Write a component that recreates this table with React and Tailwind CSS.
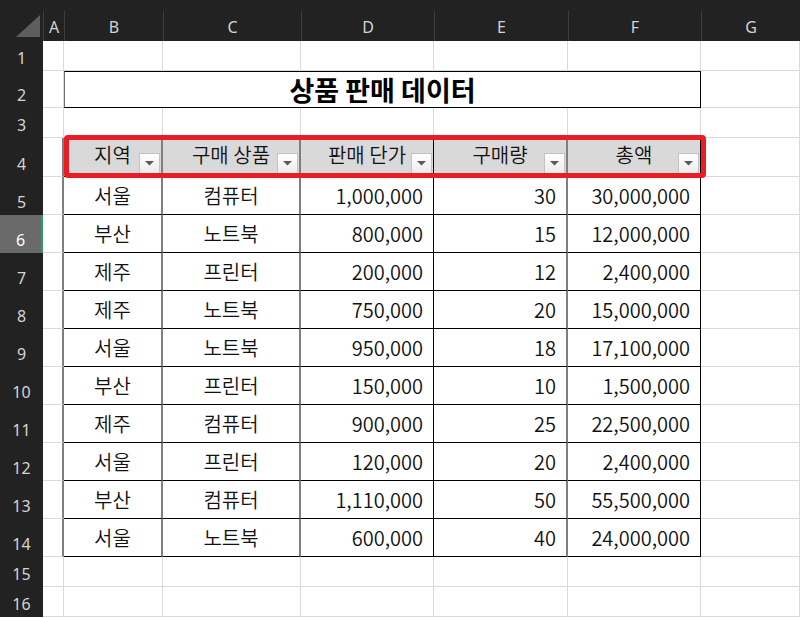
import React from "react";

const W = ["w-[21px]", "w-[99px]", "w-[138px]", "w-[133px]", "w-[134px]", "w-[133px]", "flex-1"];
const LETTERS = ["A", "B", "C", "D", "E", "F", "G"];
const FONT = "font-['Noto_Sans_CJK_KR','Noto_Sans',sans-serif]";

const data = [
  ["서울", "컴퓨터", "1,000,000", "30", "30,000,000"],
  ["부산", "노트북", "800,000", "15", "12,000,000"],
  ["제주", "프린터", "200,000", "12", "2,400,000"],
  ["제주", "노트북", "750,000", "20", "15,000,000"],
  ["서울", "노트북", "950,000", "18", "17,100,000"],
  ["부산", "프린터", "150,000", "10", "1,500,000"],
  ["제주", "컴퓨터", "900,000", "25", "22,500,000"],
  ["서울", "프린터", "120,000", "20", "2,400,000"],
  ["부산", "컴퓨터", "1,110,000", "50", "55,500,000"],
  ["서울", "노트북", "600,000", "40", "24,000,000"],
];

// right border style of table cells B..F
const TB = [
  "border-r-2 border-r-[#7f7f7f]",
  "border-r-2 border-r-[#7f7f7f]",
  "border-r border-r-black",
  "border-r-2 border-r-[#7f7f7f]",
  "border-r border-r-black",
];

function RowHead({ n, h, sel }) {
  return (
    <div
      className={`${h} w-[43px] shrink-0 flex items-end justify-center pb-[3px] text-[16px] leading-[20px] font-['Noto_Sans',sans-serif] ${
        sel
          ? "bg-[#696969] text-white border-r-2 border-r-[#21a366]"
          : "bg-[#222222] text-[#d4d4d4]"
      }`}
    >
      {n}
    </div>
  );
}

function Grid({ i }) {
  return <div className={`${W[i]} shrink-0 border-r border-b border-[#dadada]`} />;
}

function EmptyRow({ n, h }) {
  return (
    <div className="flex">
      <RowHead n={n} h={h} />
      {W.map((_, i) => (
        <Grid key={i} i={i} />
      ))}
    </div>
  );
}

function FilterBtn() {
  return (
    <div className="absolute right-[1px] bottom-[2px] w-[21px] h-[21px] border border-[#c3c3c3] bg-gradient-to-b from-white to-[#ececec] flex items-center justify-center">
      <svg width="9" height="5" viewBox="0 0 9 5">
        <polygon points="0,0 9,0 4.5,4.5" fill="#5a5a5a" />
      </svg>
    </div>
  );
}

export default function App() {
  return (
    <div className={`relative w-[800px] h-[618px] overflow-hidden bg-white ${FONT}`}>
      {/* column header bar */}
      <div className="h-[41px] bg-[#222222] flex items-end">
        <div className="w-[43px] h-[30px] shrink-0 relative">
          <svg className="absolute right-[3px] bottom-[4px]" width="24" height="22" viewBox="0 0 24 22">
            <polygon points="24,0 24,22 0,22" fill="#5e5e5e" />
          </svg>
        </div>
        {LETTERS.map((l, i) => (
          <div
            key={l}
            className={`${W[i]} shrink-0 h-[30px] border-l border-[#3d3d3d] flex items-center justify-center text-[16px] text-[#d4d4d4] font-['Noto_Sans',sans-serif] pt-[1px]`}
          >
            {l}
          </div>
        ))}
      </div>

      <EmptyRow n={1} h="h-[30px]" />

      {/* row 2 title */}
      <div className="flex">
        <RowHead n={2} h="h-[37px]" />
        <div className="w-[21px] shrink-0 border-r border-b border-[#dadada]" />
        <div className="w-[637px] shrink-0 border border-black border-l-[#6f6f6f] flex items-center justify-center text-[27px] font-bold text-black leading-none">
          상품 판매 데이터
        </div>
        <div className="flex-1 border-r border-b border-[#dadada]" />
      </div>

      <EmptyRow n={3} h="h-[30px]" />

      {/* row 4 header */}
      <div className="flex">
        <RowHead n={4} h="h-[39px]" />
        <div className="w-[21px] shrink-0 border-r-2 border-r-[#7f7f7f] border-b border-b-[#dadada]" />
        {["지역", "구매 상품", "판매 단가", "구매량", "총액"].map((t, i) => (
          <div
            key={t}
            className={`${W[i + 1]} shrink-0 relative bg-[#d9d9d9] border-b border-b-black ${TB[i]} flex items-center justify-center pb-[4px] text-[20px] font-[350] text-[#111]`}
          >
            {t}
            <FilterBtn />
          </div>
        ))}
        <div className="flex-1 border-r border-b border-[#dadada]" />
      </div>

      {/* data rows */}
      {data.map((r, ri) => (
        <div className="flex" key={ri}>
          <RowHead n={ri + 5} h="h-[38px]" sel={ri === 1} />
          <div className="w-[21px] shrink-0 border-r-2 border-r-[#7f7f7f] border-b border-b-[#dadada]" />
          {r.map((v, ci) => (
            <div
              key={ci}
              className={`${W[ci + 1]} shrink-0 border-b border-b-black ${TB[ci]} flex items-center text-[20px] font-[350] text-[#111] ${
                ci < 2 ? "justify-center" : "justify-end pr-[10px]"
              }`}
            >
              {v}
            </div>
          ))}
          <div className="flex-1 border-r border-b border-[#dadada]" />
        </div>
      ))}

      <EmptyRow n={15} h="h-[30px]" />
      <EmptyRow n={16} h="h-[30px]" />

      {/* red highlight box */}
      <div className="absolute left-[64px] top-[135px] w-[642px] h-[43px] border-[5px] border-[#ea1c24] rounded-[4px] pointer-events-none" />
    </div>
  );
}
